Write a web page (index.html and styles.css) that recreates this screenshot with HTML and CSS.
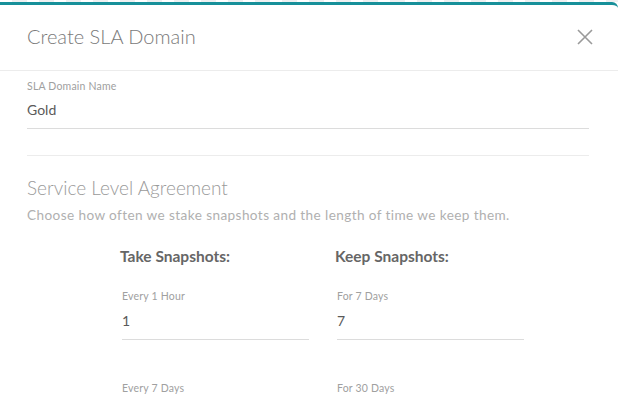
FILE: index.html
```html
<!DOCTYPE html>
<html lang="en">
<head>
    <meta charset="UTF-8">
    <meta name="viewport" content="width=device-width, initial-scale=1.0">
    <title>Create SLA Domain</title>
    <link rel="stylesheet" href="styles.css">
</head>
<body>

    <!-- Backdrop edge -->
    <div class="backdrop-edge"></div>

    <div class="modal">
        <!-- Header -->
        <div class="modal-header">
            <div class="modal-title">Create SLA Domain</div>
            <a href="#" class="close-btn" aria-label="Close">
                <svg width="16" height="16" viewBox="0 0 16 16">
                    <path d="M1 1 L15 15 M15 1 L1 15" stroke="#9a9a9a" stroke-width="1.6" fill="none"/>
                </svg>
            </a>
        </div>

        <!-- Body -->
        <div class="modal-body">
            <div class="field field-name">
                <label class="field-label">SLA Domain Name</label>
                <div class="field-value">Gold</div>
            </div>

            <div class="divider"></div>

            <h2 class="section-title">Service Level Agreement</h2>
            <p class="section-desc">Choose how often we stake snapshots and the length of time we keep them.</p>

            <div class="columns">
                <div class="column">
                    <h3 class="column-title">Take Snapshots:</h3>
                    <div class="field">
                        <label class="field-label">Every 1 Hour</label>
                        <div class="field-value">1</div>
                    </div>
                    <div class="field">
                        <label class="field-label">Every 7 Days</label>
                        <div class="field-value">&nbsp;</div>
                    </div>
                </div>
                <div class="column">
                    <h3 class="column-title">Keep Snapshots:</h3>
                    <div class="field">
                        <label class="field-label">For 7 Days</label>
                        <div class="field-value">7</div>
                    </div>
                    <div class="field">
                        <label class="field-label">For 30 Days</label>
                        <div class="field-value">&nbsp;</div>
                    </div>
                </div>
            </div>
        </div>
    </div>

</body>
</html>
```

FILE: styles.css
```css
/* General Styling */
* {
    margin: 0;
    padding: 0;
    box-sizing: border-box;
    font-family: Lato, "Open Sans", sans-serif;
}

body {
    background-color: #ffffff;
    overflow: hidden;
}

/* Backdrop edge behind the modal */
.backdrop-edge {
    height: 2px;
    background: repeating-linear-gradient(90deg, #ffffff 0, #ffffff 12px, #eef0f1 12px, #eef0f1 27px);
}

/* Modal */
.modal {
    border-top: 3px solid #17909a;
    border-top-right-radius: 6px;
    background: white;
}

.modal-header {
    height: 66px;
    display: flex;
    align-items: center;
    justify-content: space-between;
    padding: 0 25px 4px 27px;
    border-bottom: 1px solid #ececec;
}

.modal-title {
    font-size: 20px;
    font-weight: 300;
    color: #7a7a7a;
}

.close-btn {
    display: flex;
    margin-top: 2px;
}

/* Body */
.modal-body {
    padding: 9px 29px 0 27px;
}

.field-label {
    display: block;
    font-size: 10.5px;
    letter-spacing: 0.2px;
    line-height: 12px;
    color: #a0a0a0;
}

.field-value {
    font-size: 14px;
    line-height: 18px;
    color: #5a5a5a;
    margin-top: 9px;
    padding-bottom: 9px;
    border-bottom: 1px solid #dcdcdc;
}

.divider {
    height: 1px;
    background-color: #ececec;
    margin-top: 26px;
}

.section-title {
    font-size: 19px;
    font-weight: 300;
    color: #9a9a9a;
    margin-top: 20px;
    line-height: 24px;
}

.section-desc {
    font-size: 13.6px;
    letter-spacing: 0.4px;
    color: #b0b0b0;
    margin-top: 6px;
    line-height: 18px;
}

/* Snapshot columns */
.columns {
    display: flex;
    gap: 28px;
    padding-left: 95px;
    margin-top: 23px;
}

.column {
    width: 187px;
}

.column-title {
    font-size: 15.5px;
    font-weight: bold;
    color: #666666;
    line-height: 18px;
    margin-left: -2px;
}

.column .field {
    margin-top: 25px;
}

.column .field-value {
    margin-top: 10px;
}

.column .field + .field {
    margin-top: 42px;
}
```
